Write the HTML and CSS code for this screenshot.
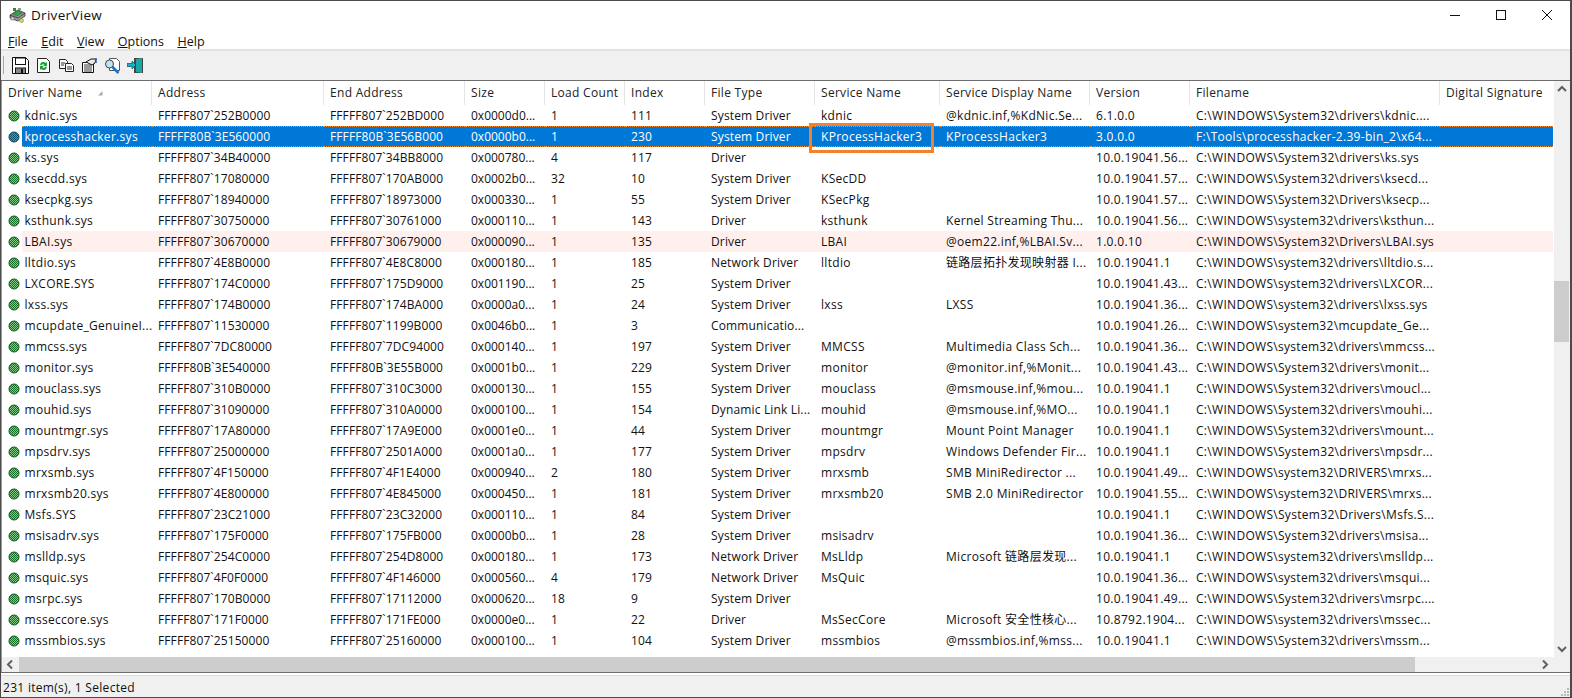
FILE: index.html
```html
<!DOCTYPE html>
<html lang="en">
<head>
<meta charset="utf-8">
<title>DriverView</title>
<link rel="stylesheet" href="styles.css">
</head>
<body>
<svg class="defs" width="0" height="0" aria-hidden="true">
  <defs>
    <pattern id="dither" width="2" height="2" patternUnits="userSpaceOnUse">
      <rect width="2" height="2" fill="#0f6e22"/>
      <rect width="1" height="1" fill="#86cc86"/>
      <rect x="1" y="1" width="1" height="1" fill="#86cc86"/>
    </pattern>
    <pattern id="dither-sel" width="2" height="2" patternUnits="userSpaceOnUse">
      <rect width="2" height="2" fill="#0e5670"/>
      <rect width="1" height="1" fill="#3f9fb0"/>
      <rect x="1" y="1" width="1" height="1" fill="#3f9fb0"/>
    </pattern>
    <symbol id="dot" viewBox="0 0 12 12">
      <circle cx="6" cy="6" r="5" fill="url(#dither)" stroke="#0f5a20" stroke-width="1"/>
    </symbol>
    <symbol id="dot-sel" viewBox="0 0 12 12">
      <circle cx="6" cy="6" r="5" fill="url(#dither-sel)" stroke="#0b4a60" stroke-width="1"/>
    </symbol>
  </defs>
</svg>
<div class="window">
  <header class="titlebar">
    <svg class="appicon" width="17" height="17" viewBox="0 0 17 17">
      <path d="M1 8 9 3l7 3v3l-7 5-8-3z" fill="#9a9a9a" stroke="#333" stroke-width=".8"/>
      <path d="M1 8l8 3 7-5" fill="none" stroke="#333" stroke-width=".8"/>
      <path d="M4 7 9 4l4 2-5 3z" fill="#2fa84a" stroke="#1c6b2c" stroke-width=".6"/>
      <rect x="4" y="1" width="3" height="3" fill="#3d7d3d"/>
      <rect x="9" y="1" width="3" height="2" fill="#6fb56f"/>
      <circle cx="12.500" cy="13.500" r="2" fill="#d7df40" stroke="#666" stroke-width=".5"/>
      <rect x="2" y="10" width="3" height="3" fill="#ddd" stroke="#444" stroke-width=".5"/>
    </svg>
    <span class="title">DriverView</span>
    <div class="controls">
      <span class="ctl"><svg width="10" height="10" viewBox="0 0 10 10"><path d="M0 5.500h10" stroke="#111" fill="none"/></svg></span>
      <span class="ctl"><svg width="10" height="10" viewBox="0 0 10 10"><rect x=".5" y=".5" width="9" height="9" fill="none" stroke="#111"/></svg></span>
      <span class="ctl"><svg width="10" height="10" viewBox="0 0 10 10"><path d="M0 0l10 10M10 0 0 10" stroke="#111" fill="none"/></svg></span>
    </div>
  </header>
  <nav class="menubar">
    <span class="menu"><u>F</u>ile</span>
    <span class="menu"><u>E</u>dit</span>
    <span class="menu"><u>V</u>iew</span>
    <span class="menu"><u>O</u>ptions</span>
    <span class="menu"><u>H</u>elp</span>
  </nav>
  <div class="toolbar">
    <span class="grip"></span>
    <svg class="tool" width="17" height="17" viewBox="0 0 17 17">
      <path d="M.5.500h13l3 3v13H.5z" fill="#fff" stroke="#111"/>
      <rect x="3.500" y="1" width="10" height="6.500" fill="#fff" stroke="#111"/>
      <rect x="3.500" y="11" width="10" height="5.500" fill="#888" stroke="#111"/>
      <rect x="9" y="12" width="2" height="4" fill="#111"/>
    </svg>
    <svg class="tool" width="17" height="17" viewBox="0 0 17 17">
      <path d="M2.500 1.500h9l3 3v11h-12z" fill="#fff" stroke="#222"/>
      <path d="M5 8a3.500 3.500 0 0 1 6-2l1-1v4H8l1.500-1.200A2 2 0 0 0 6.500 8.500z" fill="#1fa23a"/>
      <path d="M12 10a3.500 3.500 0 0 1-6 2l-1 1V9h4l-1.500 1.200a2 2 0 0 0 3 -.7z" fill="#1fa23a"/>
    </svg>
    <svg class="tool" width="17" height="17" viewBox="0 0 17 17">
      <path d="M1.500 2.500h6l2 2v7h-8z" fill="#fff" stroke="#222"/>
      <path d="M7.500 6.500h6l2 2v6h-8z" fill="#fff" stroke="#222"/>
      <path d="M3 6h4M3 8h3M9 10h5M9 12h5" stroke="#333" fill="none"/>
    </svg>
    <svg class="tool" width="17" height="17" viewBox="0 0 17 17">
      <path d="M1.500 5.500h11v10h-11z" fill="#fff" stroke="#111"/>
      <path d="M3 8h8M3 10h8M3 12h8M3 14h8" stroke="#333" fill="none"/>
      <path d="M5 5l5-3 5 0-1 4-3 2z" fill="#e8e8e8" stroke="#111"/>
      <path d="M15 1v5" stroke="#2a5fb0" stroke-width="1.500" fill="none"/>
    </svg>
    <svg class="tool" width="17" height="17" viewBox="0 0 17 17">
      <path d="M5.500 1.500h7l3 3v9h-10z" fill="#fff" stroke="#555"/>
      <circle cx="5.500" cy="7" r="4" fill="#bfe6f5" stroke="#444"/>
      <path d="M8.500 10l6 6" stroke="#1d6fd0" stroke-width="2.500" fill="none"/>
    </svg>
    <svg class="tool" width="17" height="17" viewBox="0 0 17 17">
      <path d="M7 1h9v15H7z" fill="#444"/>
      <path d="M9 2l6-1v15l-6-1z" fill="#18a7a7"/>
      <path d="M0 6.500h5V4l4 4-4 4V9.500H0z" fill="#12b5c8" stroke="#06323a" stroke-width=".6"/>
    </svg>
  </div>
  <main class="content">
    <div class="listrow">
      <div class="list">
        <table class="grid">
          <colgroup>
            <col class="c1"><col class="c2"><col class="c3"><col class="c4"><col class="c5"><col class="c6"><col class="c7"><col class="c8"><col class="c9"><col class="c10"><col class="c11"><col class="c12">
          </colgroup>
          <thead>
            <tr>
              <th class="namehead">Driver Name<svg class="sort" width="5" height="5" viewBox="0 0 5 5"><path d="M0 4.500h4.500V0z" fill="#aaa"/></svg></th>
              <th>Address</th><th>End Address</th><th>Size</th><th>Load Count</th><th>Index</th><th>File Type</th><th>Service Name</th><th>Service Display Name</th><th>Version</th><th>Filename</th><th class="last">Digital Signature</th>
            </tr>
          </thead>
          <tbody>
            <tr><td class="name"><svg class="dot" width="12" height="12"><use href="#dot"/></svg><span>kdnic.sys</span></td><td>FFFFF807`252B0000</td><td>FFFFF807`252BD000</td><td>0x0000d0...</td><td>1</td><td>111</td><td>System Driver</td><td>kdnic</td><td>@kdnic.inf,%KdNic.Se...</td><td>6.1.0.0</td><td>C:\WINDOWS\System32\drivers\kdnic....</td><td></td></tr>
            <tr class="sel"><td class="name"><svg class="dot" width="12" height="12"><use href="#dot-sel"/></svg><span>kprocesshacker.sys</span></td><td>FFFFF80B`3E560000</td><td>FFFFF80B`3E56B000</td><td>0x0000b0...</td><td>1</td><td>230</td><td>System Driver</td><td class="marked">KProcessHacker3<span class="callout"></span></td><td>KProcessHacker3</td><td>3.0.0.0</td><td>F:\Tools\processhacker-2.39-bin_2\x64...</td><td></td></tr>
            <tr><td class="name"><svg class="dot" width="12" height="12"><use href="#dot"/></svg><span>ks.sys</span></td><td>FFFFF807`34B40000</td><td>FFFFF807`34BB8000</td><td>0x000780...</td><td>4</td><td>117</td><td>Driver</td><td></td><td></td><td>10.0.19041.56...</td><td>C:\WINDOWS\System32\drivers\ks.sys</td><td></td></tr>
            <tr><td class="name"><svg class="dot" width="12" height="12"><use href="#dot"/></svg><span>ksecdd.sys</span></td><td>FFFFF807`17080000</td><td>FFFFF807`170AB000</td><td>0x0002b0...</td><td>32</td><td>10</td><td>System Driver</td><td>KSecDD</td><td></td><td>10.0.19041.57...</td><td>C:\WINDOWS\System32\drivers\ksecd...</td><td></td></tr>
            <tr><td class="name"><svg class="dot" width="12" height="12"><use href="#dot"/></svg><span>ksecpkg.sys</span></td><td>FFFFF807`18940000</td><td>FFFFF807`18973000</td><td>0x000330...</td><td>1</td><td>55</td><td>System Driver</td><td>KSecPkg</td><td></td><td>10.0.19041.57...</td><td>C:\WINDOWS\System32\Drivers\ksecp...</td><td></td></tr>
            <tr><td class="name"><svg class="dot" width="12" height="12"><use href="#dot"/></svg><span>ksthunk.sys</span></td><td>FFFFF807`30750000</td><td>FFFFF807`30761000</td><td>0x000110...</td><td>1</td><td>143</td><td>Driver</td><td>ksthunk</td><td>Kernel Streaming Thu...</td><td>10.0.19041.56...</td><td>C:\WINDOWS\system32\drivers\ksthun...</td><td></td></tr>
            <tr class="flag"><td class="name"><svg class="dot" width="12" height="12"><use href="#dot"/></svg><span>LBAI.sys</span></td><td>FFFFF807`30670000</td><td>FFFFF807`30679000</td><td>0x000090...</td><td>1</td><td>135</td><td>Driver</td><td>LBAI</td><td>@oem22.inf,%LBAI.Sv...</td><td>1.0.0.10</td><td>C:\WINDOWS\System32\Drivers\LBAI.sys</td><td></td></tr>
            <tr><td class="name"><svg class="dot" width="12" height="12"><use href="#dot"/></svg><span>lltdio.sys</span></td><td>FFFFF807`4E8B0000</td><td>FFFFF807`4E8C8000</td><td>0x000180...</td><td>1</td><td>185</td><td>Network Driver</td><td>lltdio</td><td>链路层拓扑发现映射器 I...</td><td>10.0.19041.1</td><td>C:\WINDOWS\system32\drivers\lltdio.s...</td><td></td></tr>
            <tr><td class="name"><svg class="dot" width="12" height="12"><use href="#dot"/></svg><span>LXCORE.SYS</span></td><td>FFFFF807`174C0000</td><td>FFFFF807`175D9000</td><td>0x001190...</td><td>1</td><td>25</td><td>System Driver</td><td></td><td></td><td>10.0.19041.43...</td><td>C:\WINDOWS\system32\drivers\LXCOR...</td><td></td></tr>
            <tr><td class="name"><svg class="dot" width="12" height="12"><use href="#dot"/></svg><span>lxss.sys</span></td><td>FFFFF807`174B0000</td><td>FFFFF807`174BA000</td><td>0x0000a0...</td><td>1</td><td>24</td><td>System Driver</td><td>lxss</td><td>LXSS</td><td>10.0.19041.36...</td><td>C:\WINDOWS\system32\drivers\lxss.sys</td><td></td></tr>
            <tr><td class="name"><svg class="dot" width="12" height="12"><use href="#dot"/></svg><span>mcupdate_GenuineI...</span></td><td>FFFFF807`11530000</td><td>FFFFF807`1199B000</td><td>0x0046b0...</td><td>1</td><td>3</td><td>Communicatio...</td><td></td><td></td><td>10.0.19041.26...</td><td>C:\WINDOWS\system32\mcupdate_Ge...</td><td></td></tr>
            <tr><td class="name"><svg class="dot" width="12" height="12"><use href="#dot"/></svg><span>mmcss.sys</span></td><td>FFFFF807`7DC80000</td><td>FFFFF807`7DC94000</td><td>0x000140...</td><td>1</td><td>197</td><td>System Driver</td><td>MMCSS</td><td>Multimedia Class Sch...</td><td>10.0.19041.36...</td><td>C:\WINDOWS\system32\drivers\mmcss...</td><td></td></tr>
            <tr><td class="name"><svg class="dot" width="12" height="12"><use href="#dot"/></svg><span>monitor.sys</span></td><td>FFFFF80B`3E540000</td><td>FFFFF80B`3E55B000</td><td>0x0001b0...</td><td>1</td><td>229</td><td>System Driver</td><td>monitor</td><td>@monitor.inf,%Monit...</td><td>10.0.19041.43...</td><td>C:\WINDOWS\System32\drivers\monit...</td><td></td></tr>
            <tr><td class="name"><svg class="dot" width="12" height="12"><use href="#dot"/></svg><span>mouclass.sys</span></td><td>FFFFF807`310B0000</td><td>FFFFF807`310C3000</td><td>0x000130...</td><td>1</td><td>155</td><td>System Driver</td><td>mouclass</td><td>@msmouse.inf,%mou...</td><td>10.0.19041.1</td><td>C:\WINDOWS\System32\drivers\moucl...</td><td></td></tr>
            <tr><td class="name"><svg class="dot" width="12" height="12"><use href="#dot"/></svg><span>mouhid.sys</span></td><td>FFFFF807`31090000</td><td>FFFFF807`310A0000</td><td>0x000100...</td><td>1</td><td>154</td><td>Dynamic Link Li...</td><td>mouhid</td><td>@msmouse.inf,%MO...</td><td>10.0.19041.1</td><td>C:\WINDOWS\System32\drivers\mouhi...</td><td></td></tr>
            <tr><td class="name"><svg class="dot" width="12" height="12"><use href="#dot"/></svg><span>mountmgr.sys</span></td><td>FFFFF807`17A80000</td><td>FFFFF807`17A9E000</td><td>0x0001e0...</td><td>1</td><td>44</td><td>System Driver</td><td>mountmgr</td><td>Mount Point Manager</td><td>10.0.19041.1</td><td>C:\WINDOWS\System32\drivers\mount...</td><td></td></tr>
            <tr><td class="name"><svg class="dot" width="12" height="12"><use href="#dot"/></svg><span>mpsdrv.sys</span></td><td>FFFFF807`25000000</td><td>FFFFF807`2501A000</td><td>0x0001a0...</td><td>1</td><td>177</td><td>System Driver</td><td>mpsdrv</td><td>Windows Defender Fir...</td><td>10.0.19041.1</td><td>C:\WINDOWS\System32\drivers\mpsdr...</td><td></td></tr>
            <tr><td class="name"><svg class="dot" width="12" height="12"><use href="#dot"/></svg><span>mrxsmb.sys</span></td><td>FFFFF807`4F150000</td><td>FFFFF807`4F1E4000</td><td>0x000940...</td><td>2</td><td>180</td><td>System Driver</td><td>mrxsmb</td><td>SMB MiniRedirector ...</td><td>10.0.19041.49...</td><td>C:\WINDOWS\system32\DRIVERS\mrxs...</td><td></td></tr>
            <tr><td class="name"><svg class="dot" width="12" height="12"><use href="#dot"/></svg><span>mrxsmb20.sys</span></td><td>FFFFF807`4E800000</td><td>FFFFF807`4E845000</td><td>0x000450...</td><td>1</td><td>181</td><td>System Driver</td><td>mrxsmb20</td><td>SMB 2.0 MiniRedirector</td><td>10.0.19041.55...</td><td>C:\WINDOWS\system32\DRIVERS\mrxs...</td><td></td></tr>
            <tr><td class="name"><svg class="dot" width="12" height="12"><use href="#dot"/></svg><span>Msfs.SYS</span></td><td>FFFFF807`23C21000</td><td>FFFFF807`23C32000</td><td>0x000110...</td><td>1</td><td>84</td><td>System Driver</td><td></td><td></td><td>10.0.19041.1</td><td>C:\WINDOWS\System32\Drivers\Msfs.S...</td><td></td></tr>
            <tr><td class="name"><svg class="dot" width="12" height="12"><use href="#dot"/></svg><span>msisadrv.sys</span></td><td>FFFFF807`175F0000</td><td>FFFFF807`175FB000</td><td>0x0000b0...</td><td>1</td><td>28</td><td>System Driver</td><td>msisadrv</td><td></td><td>10.0.19041.36...</td><td>C:\WINDOWS\System32\drivers\msisa...</td><td></td></tr>
            <tr><td class="name"><svg class="dot" width="12" height="12"><use href="#dot"/></svg><span>mslldp.sys</span></td><td>FFFFF807`254C0000</td><td>FFFFF807`254D8000</td><td>0x000180...</td><td>1</td><td>173</td><td>Network Driver</td><td>MsLldp</td><td>Microsoft 链路层发现...</td><td>10.0.19041.1</td><td>C:\WINDOWS\system32\drivers\mslldp...</td><td></td></tr>
            <tr><td class="name"><svg class="dot" width="12" height="12"><use href="#dot"/></svg><span>msquic.sys</span></td><td>FFFFF807`4F0F0000</td><td>FFFFF807`4F146000</td><td>0x000560...</td><td>4</td><td>179</td><td>Network Driver</td><td>MsQuic</td><td></td><td>10.0.19041.36...</td><td>C:\WINDOWS\system32\drivers\msqui...</td><td></td></tr>
            <tr><td class="name"><svg class="dot" width="12" height="12"><use href="#dot"/></svg><span>msrpc.sys</span></td><td>FFFFF807`170B0000</td><td>FFFFF807`17112000</td><td>0x000620...</td><td>18</td><td>9</td><td>System Driver</td><td></td><td></td><td>10.0.19041.49...</td><td>C:\WINDOWS\System32\drivers\msrpc....</td><td></td></tr>
            <tr><td class="name"><svg class="dot" width="12" height="12"><use href="#dot"/></svg><span>msseccore.sys</span></td><td>FFFFF807`171F0000</td><td>FFFFF807`171FE000</td><td>0x0000e0...</td><td>1</td><td>22</td><td>Driver</td><td>MsSecCore</td><td>Microsoft 安全性核心...</td><td>10.8792.1904...</td><td>C:\WINDOWS\system32\drivers\mssec...</td><td></td></tr>
            <tr><td class="name"><svg class="dot" width="12" height="12"><use href="#dot"/></svg><span>mssmbios.sys</span></td><td>FFFFF807`25150000</td><td>FFFFF807`25160000</td><td>0x000100...</td><td>1</td><td>104</td><td>System Driver</td><td>mssmbios</td><td>@mssmbios.inf,%mss...</td><td>10.0.19041.1</td><td>C:\WINDOWS\System32\drivers\mssm...</td><td></td></tr>
          </tbody>
        </table>
      </div>
      <div class="vscroll">
        <svg class="arrow" width="16" height="16" viewBox="0 0 16 16"><path d="M4 10l4-4 4 4" fill="none" stroke="#606060" stroke-width="2"/></svg>
        <div class="vtrack"><div class="vthumb"></div></div>
        <svg class="arrow" width="16" height="16" viewBox="0 0 16 16"><path d="M4 6l4 4 4-4" fill="none" stroke="#606060" stroke-width="2"/></svg>
      </div>
    </div>
    <div class="hscroll">
      <svg class="arrow" width="17" height="15" viewBox="0 0 17 15"><path d="M10 3.500l-4 4 4 4" fill="none" stroke="#606060" stroke-width="2"/></svg>
      <div class="htrack"><div class="hthumb"></div></div>
      <svg class="arrow" width="17" height="15" viewBox="0 0 17 15"><path d="M7 3.500l4 4-4 4" fill="none" stroke="#606060" stroke-width="2"/></svg>
      <span class="corner"></span>
    </div>
  </main>
  <footer class="status">
    <span>231 item(s), 1 Selected</span>
    <svg class="resize" width="10" height="10" viewBox="0 0 10 10"><path d="M7 1h2v2H7zM4 4h2v2H4zM7 4h2v2H7zM1 7h2v2H1zM4 7h2v2H4zM7 7h2v2H7z" fill="#b8b8b8"/></svg>
  </footer>
</div>
</body>
</html>
```
FILE: styles.css
```css
* { box-sizing: border-box; }
html, body { margin: 0; padding: 0; height: 100%; background: #fff; overflow: hidden; }
body { font: 12px "Open Sans", "Noto Sans CJK SC", sans-serif; letter-spacing: .3px; color: #111; }
.defs { display: block; height: 0; }

.window {
  width: 1572px;
  height: 698px;
  display: flex;
  flex-direction: column;
  border: 1px solid #4b4b4b;
  border-right-width: 2px;
  background: #fff;
}

.titlebar { height: 29px; display: flex; align-items: center; padding-left: 8px; flex: none; }
.appicon { flex: none; }
.title { margin-left: 5px; padding-bottom: 2px; font-size: 13.500px; }
.controls { margin-left: auto; display: flex; margin-top: -1px; }
.ctl { width: 46px; height: 29px; display: flex; align-items: center; justify-content: center; }

.menubar { height: 21px; display: flex; align-items: center; flex: none; padding: 3px 0 0 7px; gap: 13.500px; font-size: 12.500px; letter-spacing: 0; border-bottom: 2px solid #e3e3e3; }

.toolbar { height: 30px; flex: none; background: #f0f0f0; border-bottom: 1px solid #6d6d6d; display: flex; align-items: center; padding-left: 2px; gap: 6px; padding-bottom: 1px; }
.grip { width: 1px; height: 18px; background: #a8a8a8; margin-right: 2px; }
.tool { flex: none; }

.content { flex: 1; min-height: 0; display: flex; flex-direction: column; border-left: 1px solid #9a9a9a; }
.listrow { flex: 1; min-height: 0; display: flex; }
.list { flex: 1; min-width: 0; overflow: hidden; background: #fff; }

.grid { border-collapse: separate; border-spacing: 0; table-layout: fixed; width: 1551px; }
.c1 { width: 150px; } .c2 { width: 172px; } .c3 { width: 141px; } .c4 { width: 80px; }
.c5 { width: 80px; } .c6 { width: 80px; } .c7 { width: 110px; } .c8 { width: 125px; }
.c9 { width: 150px; } .c10 { width: 100px; } .c11 { width: 250px; } .c12 { width: 113px; }

th {
  height: 24px;
  padding: 0 0 2px 6px;
  font-weight: 400;
  text-align: left;
  color: #222;
  white-space: nowrap;
  overflow: hidden;
  border-right: 1px solid #e5e5e5;
}
th.last { border-right: 0; }
.namehead { position: relative; }
.sort { position: absolute; left: 96px; top: 10px; }

td {
  height: 21px;
  padding: 0 0 0 6px;
  white-space: nowrap;
  overflow: hidden;
  line-height: 19px;
  border-top: 1px solid transparent;
  border-bottom: 1px solid transparent;
}
td:nth-child(2), td:nth-child(3) { letter-spacing: .1px; }
td:nth-child(4) { letter-spacing: 0; }
td:nth-child(5), td:nth-child(6), td:nth-child(7) { letter-spacing: .15px; }
td.name { padding: 0; }
.name { display: flex; align-items: center; height: 21px; border: 0; }
.dot { flex: none; margin: 0 2px 0 6px; }
.name span { flex: 1; min-width: 0; height: 21px; line-height: 19px; padding-left: 2.500px; border-top: 1px solid transparent; border-bottom: 1px solid transparent; }

.sel td:not(.name), .sel .name span {
  background: #0078d7;
  color: #fff;
  border-top: 1px dotted #f18a2c;
  border-bottom: 1px dotted #f18a2c;
}
.flag td:not(.name), .flag .name span { background: #fff0ee; }

.marked { position: relative; overflow: visible; }
.callout {
  position: absolute;
  left: -6px;
  top: -4px;
  width: 125px;
  height: 30px;
  border: 3px solid #f5822a;
  pointer-events: none;
}

.vscroll { width: 16px; flex: none; background: #f0f0f0; display: flex; flex-direction: column; margin-left: 1px; }
.arrow { flex: none; display: block; }
.vtrack { flex: 1; position: relative; }
.vthumb { margin-top: 184px; height: 61px; background: #cdcdcd; width: 15px; }

.hscroll { height: 15px; flex: none; display: flex; background: #f0f0f0; }
.htrack { flex: 1; min-width: 0; }
.hthumb { width: 1396px; height: 15px; background: #cdcdcd; }
.corner { width: 17px; flex: none; }

.status { height: 25px; flex: none; background: #f0f0f0; border-top: 1px solid #6d6d6d; box-shadow: inset 0 2px 0 #fff, inset 0 3px 0 #dcdcdc; display: flex; align-items: center; padding: 4px 0 0 2px; position: relative; }
.resize { margin-left: auto; align-self: flex-end; }
```
